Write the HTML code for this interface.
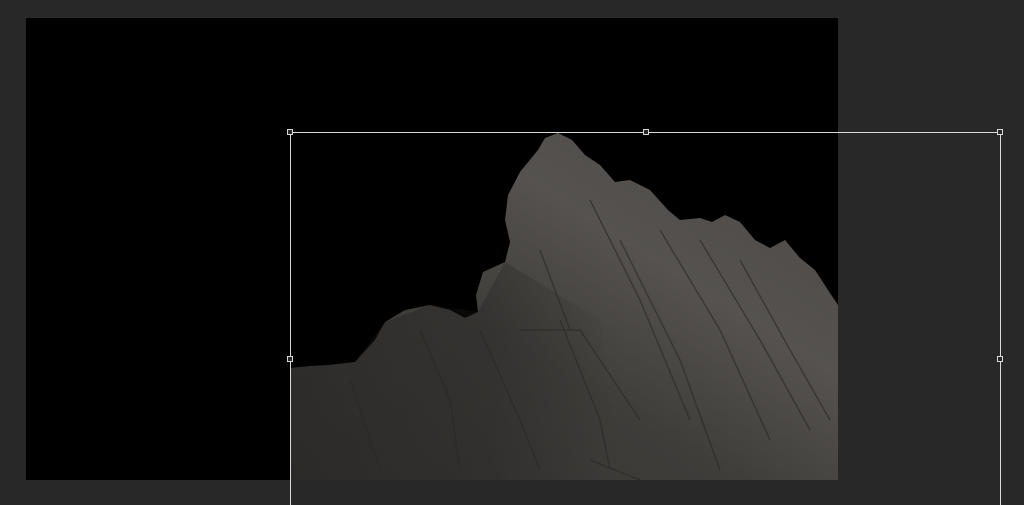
<!DOCTYPE html>
<html><head><style>
html,body{margin:0;padding:0;width:1024px;height:505px;overflow:hidden;background:#282828;}
svg{display:block}
</style></head><body>
<svg width="1024" height="505" viewBox="0 0 1024 505">
<defs>
<linearGradient id="g" x1="0" y1="1" x2="1" y2="0">
<stop offset="0" stop-color="#363432"/>
<stop offset="0.4" stop-color="#3f3d3a"/>
<stop offset="0.65" stop-color="#55524f"/>
<stop offset="1" stop-color="#4a4744"/>
</linearGradient>
<linearGradient id="sh" x1="0" y1="0" x2="1" y2="0">
<stop offset="0" stop-color="#1e1c1b" stop-opacity="0.4"/>
<stop offset="0.6" stop-color="#1e1c1b" stop-opacity="0.3"/>
<stop offset="1" stop-color="#1e1c1b" stop-opacity="0"/>
</linearGradient>
</defs>
<rect x="26" y="18" width="812" height="462" fill="#000"/>
<path d="M290,368 L310,366 L330,365 L355,362 L375,340 L385,322 L405,310 L430,305 L450,310 L465,318 L478,312 L476,295 L483,272 L505,262 L510,242 L505,220 L508,195 L520,172 L538,150 L545,138 L558,133 L572,140 L585,155 L600,165 L615,182 L630,180 L650,190 L668,210 L680,220 L700,218 L712,222 L725,215 L740,222 L755,240 L770,248 L785,240 L800,258 L815,270 L828,290 L838,305 L838,480 L290,480 Z" fill="url(#g)"/>
<path d="M290,368 L355,362 L385,322 L430,305 L478,312 L505,262 L600,320 L620,480 L290,480Z" fill="url(#sh)"/>
<g stroke="#2a2826" stroke-width="1.5" fill="none" opacity="0.6">
<path d="M560,320 L600,420 L610,470"/><path d="M620,240 L680,360 L720,470"/>
<path d="M660,230 L720,330 L770,440"/><path d="M700,240 L760,340 L810,430"/>
<path d="M740,260 L790,350 L830,420"/><path d="M540,250 L570,330"/>
<path d="M590,200 L640,300 L690,420"/><path d="M480,330 L520,420 L540,470"/>
<path d="M420,330 L450,400 L460,470"/><path d="M350,380 L380,470"/>
<path d="M520,330 L580,330 L640,420"/><path d="M590,460 L640,480"/>
</g>
<g stroke="#d8d8d8" stroke-width="1" fill="none" shape-rendering="crispEdges">
<line x1="290.5" y1="132.5" x2="1000.5" y2="132.5"/>
<line x1="290.5" y1="132.5" x2="290.5" y2="505"/>
<line x1="1000.5" y1="132.5" x2="1000.5" y2="505"/>
</g>
<g fill="#282828" stroke="#d8d8d8" stroke-width="1" shape-rendering="crispEdges">
<rect x="287.5" y="129.5" width="5" height="5"/>
<rect x="643.5" y="129.5" width="5" height="5"/>
<rect x="997.5" y="129.5" width="5" height="5"/>
<rect x="287.5" y="356.5" width="5" height="5"/>
<rect x="997.5" y="356.5" width="5" height="5"/>
</g>
</svg>
</body></html>
